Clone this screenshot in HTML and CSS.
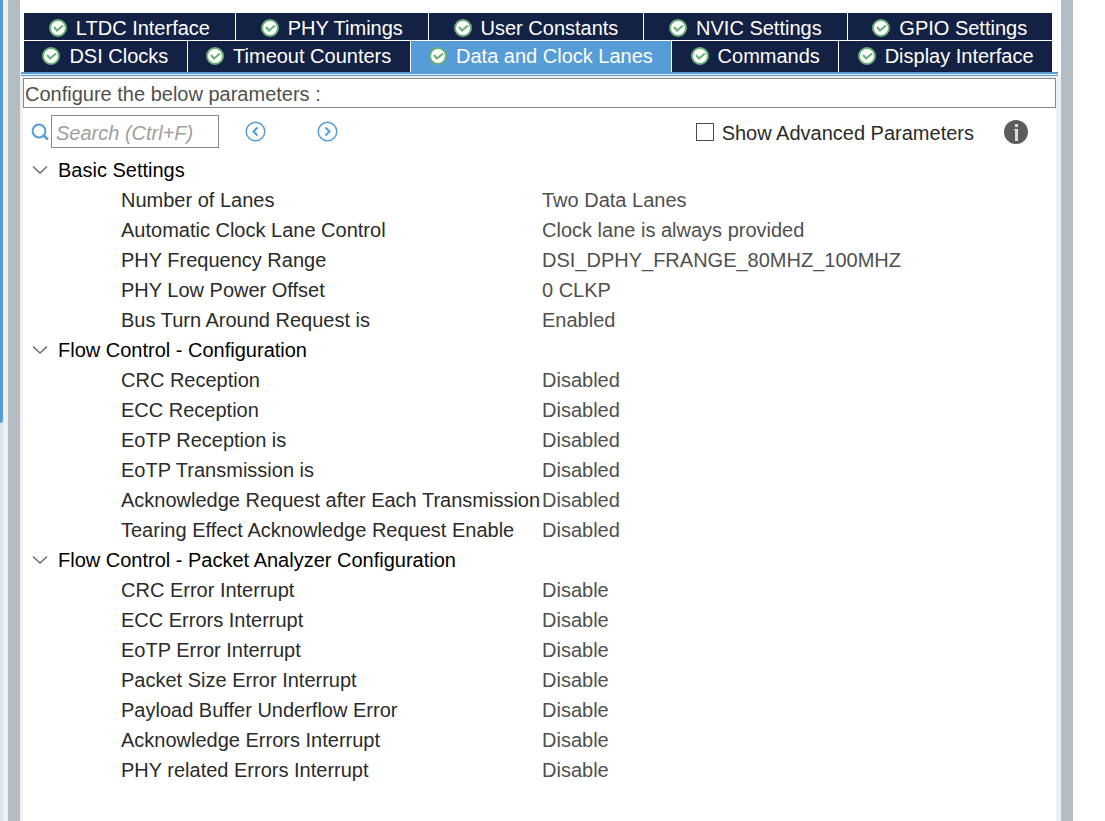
FILE: index.html
```html
<!DOCTYPE html>
<html lang="en">
<head>
  <meta charset="UTF-8" />
  <meta name="viewport" content="width=device-width, initial-scale=1.0" />
  <title>DSI Host Configuration</title>
  <link rel="stylesheet" href="styles.css">
</head>
<body>
  <svg class="defs" width="0" height="0" aria-hidden="true">
    <symbol id="check" viewBox="0 0 18 18">
      <circle cx="9" cy="9" r="8" fill="#fff" stroke="#68b076" stroke-width="2" />
      <path d="M5 8l3 3.500L14 6.500" fill="none" stroke="#68b076" stroke-width="2" />
    </symbol>
    <symbol id="chevron" viewBox="0 0 16 10">
      <path d="M1 1.500l7 6.500 7-6.500" fill="none" stroke="#6b6b6b" stroke-width="1.500" />
    </symbol>
  </svg>

  <div class="scrollbar"><div class="thumb"></div></div>

  <main class="panel">
    <nav class="tabs">
      <div class="tab-row">
        <button class="tab"><svg class="ok"><use href="#check" /></svg>LTDC Interface</button>
        <button class="tab"><svg class="ok"><use href="#check" /></svg>PHY Timings</button>
        <button class="tab"><svg class="ok"><use href="#check" /></svg>User Constants</button>
        <button class="tab"><svg class="ok"><use href="#check" /></svg>NVIC Settings</button>
        <button class="tab"><svg class="ok"><use href="#check" /></svg>GPIO Settings</button>
      </div>
      <div class="tab-row front">
        <button class="tab"><svg class="ok"><use href="#check" /></svg>DSI Clocks</button>
        <button class="tab"><svg class="ok"><use href="#check" /></svg>Timeout Counters</button>
        <button class="tab active"><svg class="ok"><use href="#check" /></svg>Data and Clock Lanes</button>
        <button class="tab"><svg class="ok"><use href="#check" /></svg>Commands</button>
        <button class="tab"><svg class="ok"><use href="#check" /></svg>Display Interface</button>
      </div>
    </nav>
    <div class="tab-line"></div>

    <div class="content">
      <p class="intro">Configure the below parameters :</p>

      <div class="sheet">
        <div class="toolbar">
          <label class="search-label" for="search" aria-label="Search">
            <svg width="18" height="18" viewBox="0 0 18 18" fill="none" stroke="#569dd8">
              <circle cx="8" cy="8" r="6.400" stroke-width="2" />
              <path d="M12 12l5 4.500" stroke-width="2.500" />
            </svg>
          </label>
          <input class="search" id="search" type="text" placeholder="Search (Ctrl+F)" />
          <div class="steps">
            <button class="icon-btn" aria-label="Previous">
              <svg width="21" height="21" viewBox="0 0 21 21" fill="none" stroke="#569dd8">
                <circle cx="10.500" cy="10.500" r="9.300" stroke-width="1.500" />
                <path d="M12.500 6.500l-4 4 4 4" stroke-width="2" />
              </svg>
            </button>
            <button class="icon-btn" aria-label="Next">
              <svg width="21" height="21" viewBox="0 0 21 21" fill="none" stroke="#569dd8">
                <circle cx="10.500" cy="10.500" r="9.300" stroke-width="1.500" />
                <path d="M8.500 6.500l4 4-4 4" stroke-width="2" />
              </svg>
            </button>
          </div>
          <div class="advanced">
            <input type="checkbox" id="advanced" />
            <label for="advanced">Show Advanced Parameters</label>
          </div>
          <button class="icon-btn" aria-label="Information">
            <svg width="24" height="24" viewBox="0 0 24 24">
              <circle cx="12" cy="12" r="12" fill="#5c5c5c" />
              <path d="M11 4h3v3h-3zM10 9h4v12h-3V10h-1z" fill="#dedede" />
            </svg>
          </button>
        </div>

        <table class="params">
          <tbody>
            <tr><th class="group" colspan="2"><button><svg class="chev"><use href="#chevron" /></svg>Basic Settings</button></th></tr>
            <tr><th>Number of Lanes</th><td>Two Data Lanes</td></tr>
            <tr><th>Automatic Clock Lane Control</th><td>Clock lane is always provided</td></tr>
            <tr><th>PHY Frequency Range</th><td>DSI_DPHY_FRANGE_80MHZ_100MHZ</td></tr>
            <tr><th>PHY Low Power Offset</th><td>0 CLKP</td></tr>
            <tr><th>Bus Turn Around Request is</th><td>Enabled</td></tr>
          </tbody>
          <tbody>
            <tr><th class="group" colspan="2"><button><svg class="chev"><use href="#chevron" /></svg>Flow Control - Configuration</button></th></tr>
            <tr><th>CRC Reception</th><td>Disabled</td></tr>
            <tr><th>ECC Reception</th><td>Disabled</td></tr>
            <tr><th>EoTP Reception is</th><td>Disabled</td></tr>
            <tr><th>EoTP Transmission is</th><td>Disabled</td></tr>
            <tr><th>Acknowledge Request after Each Transmission</th><td>Disabled</td></tr>
            <tr><th>Tearing Effect Acknowledge Request Enable</th><td>Disabled</td></tr>
          </tbody>
          <tbody>
            <tr><th class="group" colspan="2"><button><svg class="chev"><use href="#chevron" /></svg>Flow Control - Packet Analyzer Configuration</button></th></tr>
            <tr><th>CRC Error Interrupt</th><td>Disable</td></tr>
            <tr><th>ECC Errors Interrupt</th><td>Disable</td></tr>
            <tr><th>EoTP Error Interrupt</th><td>Disable</td></tr>
            <tr><th>Packet Size Error Interrupt</th><td>Disable</td></tr>
            <tr><th>Payload Buffer Underflow Error</th><td>Disable</td></tr>
            <tr><th>Acknowledge Errors Interrupt</th><td>Disable</td></tr>
            <tr><th>PHY related Errors Interrupt</th><td>Disable</td></tr>
          </tbody>
        </table>
      </div>
    </div>
  </main>
</body>
</html>
```
FILE: styles.css
```css
* {
  box-sizing: border-box;
}
body {
  margin: 0;
  min-height: 100vh;
  display: flex;
  background: #fff;
  color: #2b2b2b;
  font-family: "Liberation Sans", Arial, sans-serif;
  font-size: 20px;
  line-height: 24px;
}
button, input {
  font: inherit;
}
button {
  margin: 0;
  padding: 0;
  border: none;
  background: none;
  color: inherit;
  cursor: pointer;
}
svg {
  display: block;
  flex: none;
}
.defs {
  position: absolute;
}

/* left scrollbar */
.scrollbar {
  width: 8px;
  border-right: 5px solid #eff0f1;
  background: #d6e5f5;
}
.thumb {
  height: 423px;
  background: #569dd8;
  border-bottom-right-radius: 3px;
}

.panel {
  flex: 1;
  display: flex;
  flex-direction: column;
  margin-right: 32px;
  border: solid #b3bbc3;
  border-width: 0 12px;
}

/* tabs */
.tabs {
  padding: 13px 9px 0 4px;
}
.tab-row {
  display: flex;
  gap: 1px;
  height: 27px;
  margin-bottom: 1px;
}
.tab-row.front {
  height: 31px;
  margin-bottom: 0;
}
.tab {
  flex: 1 1 auto;
  display: flex;
  align-items: center;
  justify-content: center;
  gap: 9px;
  padding-top: 2px;
  background: #132144;
  color: #fff;
  white-space: nowrap;
}
.front .tab {
  padding: 0 0 2px;
}
.tab.active {
  background: #569dd8;
}
.ok {
  width: 18px;
  height: 18px;
}
.tab-line {
  height: 4px;
  margin: 0 3px 0 1px;
  border-top: 2px solid #569dd8;
  border-bottom: 1px solid #569dd8;
  background: #eff0f1;
}

/* content */
.content {
  flex: 1;
  display: flex;
  flex-direction: column;
  padding: 2px 5px 0 3px;
  background: #eff0f1;
}
.intro {
  margin: 0;
  padding: 3px 1px 1px;
  border: 1px solid #85888c;
  background: #fff;
  color: #505050;
}
.sheet {
  flex: 1;
  background: #fff;
}
.toolbar {
  display: flex;
  align-items: center;
  height: 47px;
  padding: 0 28px 0 8px;
}
.search-label {
  margin-right: 2px;
}
.search {
  width: 168px;
  height: 33px;
  padding: 3px 4px 0;
  border: 1px solid #85888c;
  border-radius: 0;
  background: #fff;
}
.search::placeholder {
  color: #a0a0a0;
  font-style: italic;
  opacity: 1;
}
.steps {
  display: flex;
  gap: 51px;
  margin-left: 26px;
}
.advanced {
  display: flex;
  align-items: center;
  gap: 8px;
  margin: 0 30px 0 auto;
}
.advanced label {
  padding-top: 2px;
}
.advanced input {
  appearance: none;
  width: 18px;
  height: 18px;
  margin: 0;
  border: 1px solid #4d4d4d;
  background: #fff;
}
.advanced input:checked {
  background: #569dd8;
}

/* parameters */
.params {
  width: 100%;
  border-collapse: collapse;
}
.params tr {
  height: 30px;
}
.params th, .params td {
  padding: 0;
  font-weight: normal;
  text-align: left;
  white-space: nowrap;
}
.params th {
  width: 519px;
  padding-left: 98px;
}
.params td {
  color: #505050;
}
.params .group {
  padding-left: 9px;
  color: #000;
}
.group button {
  display: flex;
  align-items: center;
  gap: 10px;
}
.chev {
  width: 16px;
  height: 10px;
}
```
